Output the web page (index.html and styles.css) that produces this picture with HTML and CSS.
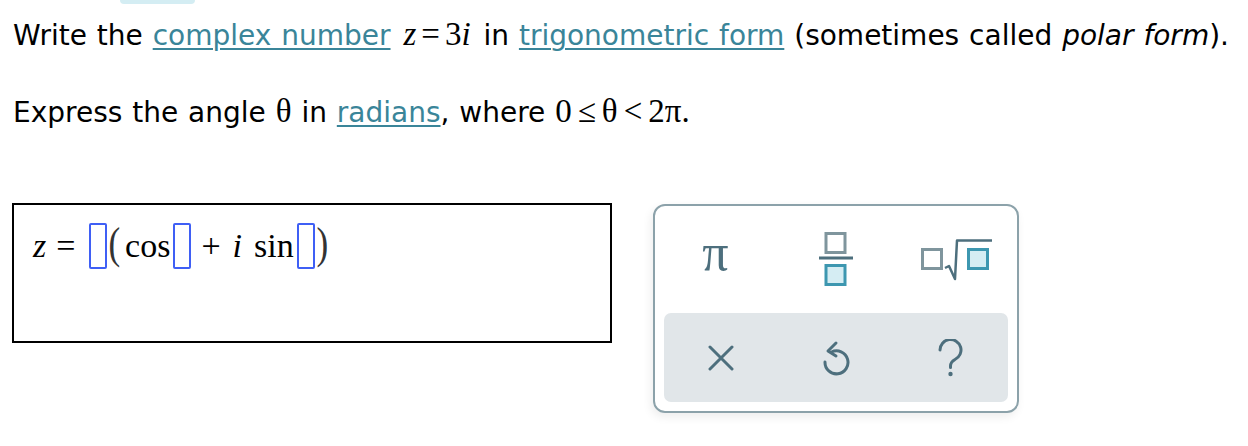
FILE: index.html
```html
<!DOCTYPE html>
<html>
<head>
<meta charset="utf-8">
<link rel="stylesheet" href="styles.css">
</head>
<body>
<div class="page">
  <div class="tab"></div>
  <p class="line l1">Write the <a class="lnk">complex number</a> <span class="m mx"><i>z</i><span class="rel">=</span>3<i>i</i></span> in <a class="lnk">trigonometric form</a> (sometimes called <em>polar form</em>).</p>
  <p class="line l2">Express the angle <span class="m">θ</span> in <a class="lnk">radians</a>, where <span class="m">0<span class="rel">≤</span>θ<span class="rel">&lt;</span>2π.</span></p>
  <div class="work">
    <div class="answer">
      <div class="expr"><i>z</i><span class="eq">=</span><span class="ph"></span><span class="par">(</span><span class="fn">cos</span><span class="ph"></span><span class="plus">+</span><i class="im">i</i><span class="fn">sin</span><span class="ph"></span><span class="par">)</span></div>
    </div>
    <div class="pad">
      <div class="row top">
        <div class="key"><span class="pi">π</span></div>
        <div class="key">
          <svg width="36" height="56" viewBox="0 0 36 56">
            <rect x="8" y="1.5" width="19" height="19" fill="#fff" stroke="#7f959d" stroke-width="3"/>
            <line x1="1" y1="26" x2="35" y2="26" stroke="#4d6f7d" stroke-width="3"/>
            <rect x="8" y="33.5" width="19" height="19" fill="#d5edf3" stroke="#3d97b0" stroke-width="3"/>
          </svg>
        </div>
        <div class="key">
          <svg class="sq" width="72" height="42" viewBox="0 0 72 42">
            <rect x="1.5" y="10.5" width="19" height="19" fill="#fff" stroke="#7f959d" stroke-width="3"/>
            <path d="M24 29 L28 27 L34 40 L36 1.5 L71 1.5" fill="none" stroke="#4d6f7d" stroke-width="2.5" stroke-linejoin="round"/>
            <rect x="47.5" y="10.5" width="19" height="19" fill="#d5edf3" stroke="#3d97b0" stroke-width="3"/>
          </svg>
        </div>
      </div>
      <div class="row bottom">
        <div class="key">
          <svg width="26" height="26" viewBox="0 0 26 26">
            <path d="M2 2 L24 24 M24 2 L2 24" stroke="#4d6f7d" stroke-width="3" stroke-linecap="round"/>
          </svg>
        </div>
        <div class="key">
          <svg width="28" height="36" viewBox="0 0 28 36">
            <path d="M9.5 12 A11.5 11.5 0 1 1 3 22" fill="none" stroke="#4d6f7d" stroke-width="3" stroke-linecap="round"/>
            <path d="M14 3 L6 11 L14 16" fill="none" stroke="#4d6f7d" stroke-width="3" stroke-linecap="round" stroke-linejoin="round"/>
          </svg>
        </div>
        <div class="key">
          <svg width="28" height="38" viewBox="0 0 28 38">
            <path d="M3 11 A10.5 10.5 0 1 1 18 20.5 C14.5 22.5 13.5 24 13.5 27 L13.5 28.5" fill="none" stroke="#4d6f7d" stroke-width="3" stroke-linecap="round"/>
            <circle cx="13.5" cy="35" r="2.2" fill="#4d6f7d"/>
          </svg>
        </div>
      </div>
    </div>
  </div>
</div>
</body>
</html>
```

FILE: styles.css
```css
html, body {
  margin: 0;
  padding: 0;
  background: #fff;
}
.page {
  width: 1248px;
  height: 446px;
  overflow: hidden;
  font-family: "DejaVu Sans", Verdana, sans-serif;
  color: #000;
}
.tab {
  width: 75px;
  height: 4px;
  margin-left: 120px;
  background: #d4edf3;
  border-radius: 0 0 7px 7px;
}
.line {
  margin: 0;
  padding-left: 13px;
  font-size: 28px;
  word-spacing: 1px;
  white-space: nowrap;
  line-height: 30px;
}
.l1 { margin-top: 15px; }
.l2 { margin-top: 45px; }
.lnk {
  color: #3a8599;
  text-decoration: underline;
  text-underline-offset: 3px;
  text-decoration-thickness: 2px;
}
em { font-style: italic; }
.m {
  font-family: "Liberation Serif", "Times New Roman", serif;
  font-size: 33px;
  word-spacing: 0;
}
.mx { margin: 0 3px; }
.rel { margin: 0 5px; }
.l2 .rel { margin: 0 6px; }
.work {
  display: flex;
  align-items: flex-start;
  margin-top: 75px;
  padding-left: 12px;
  gap: 41px;
}
.answer {
  box-sizing: border-box;
  width: 600px;
  height: 140px;
  border: 2px solid #000;
  padding: 16px 0 0 19px;
}
.expr {
  display: flex;
  align-items: center;
  font-family: "Liberation Serif", "Times New Roman", serif;
  font-size: 34px;
  height: 50px;
}
.eq { margin: 0 14px 0 10px; }
.ph {
  box-sizing: border-box;
  display: inline-block;
  width: 18px;
  height: 46px;
  border: 2px solid #3f5ff5;
  border-radius: 2px;
}
.par {
  font-size: 44px;
  color: #333;
  transform: scaleX(0.8);
  margin: -6px 0 0 0;
}
.fn { margin: 0 3px 0 3px; }
.plus { margin: 0 12px 0 10px; }
.im { margin-right: 9px; }
.pad {
  box-sizing: border-box;
  width: 366px;
  height: 209px;
  margin-top: 1px;
  border: 2px solid #8ca2aa;
  border-radius: 12px;
  padding: 0 9px 9px 9px;
  box-shadow: -2px 4px 10px rgba(0, 0, 0, 0.07);
  display: flex;
  flex-direction: column;
}
.row {
  display: grid;
  grid-template-columns: repeat(3, 1fr);
}
.top {
  height: 107px;
  align-items: center;
}
.bottom {
  flex: 1;
  background: #e1e6e9;
  border-radius: 7px;
  align-items: center;
}
.key {
  display: flex;
  justify-content: center;
  align-items: center;
}
.pi {
  font-family: "Liberation Serif", "Times New Roman", serif;
  font-size: 52px;
  color: #4d6f7d;
  margin: 0 12px 14px 0;
}
.sq { margin-left: 12px; }
```
